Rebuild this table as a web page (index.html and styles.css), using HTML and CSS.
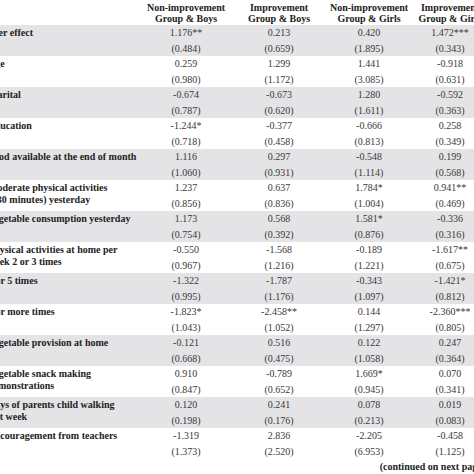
FILE: index.html
```html
<!DOCTYPE html>
<html>
<head>
<meta charset="utf-8">
<link rel="stylesheet" href="styles.css">
</head>
<body>
<div class="page">
  <div class="table">
    <div class="row head">
      <div class="label"></div>
      <div class="cell">Non-improvement<br>Group &amp; Boys</div>
      <div class="cell">Improvement<br>Group &amp; Boys</div>
      <div class="cell">Non-improvement<br>Group &amp; Girls</div>
      <div class="cell">Improvement<br>Group &amp; Girls</div>
    </div>
    <div class="row shade">
      <div class="label">Peer effect</div>
      <div class="cell">1.176**<br>(0.484)</div>
      <div class="cell">0.213<br>(0.659)</div>
      <div class="cell">0.420<br>(1.895)</div>
      <div class="cell">1.472***<br>(0.343)</div>
    </div>
    <div class="row">
      <div class="label">Age</div>
      <div class="cell">0.259<br>(0.980)</div>
      <div class="cell">1.299<br>(1.172)</div>
      <div class="cell">1.441<br>(3.085)</div>
      <div class="cell">-0.918<br>(0.631)</div>
    </div>
    <div class="row shade">
      <div class="label">Marital</div>
      <div class="cell">-0.674<br>(0.787)</div>
      <div class="cell">-0.673<br>(0.620)</div>
      <div class="cell">1.280<br>(1.611)</div>
      <div class="cell">-0.592<br>(0.363)</div>
    </div>
    <div class="row">
      <div class="label">Education</div>
      <div class="cell">-1.244*<br>(0.718)</div>
      <div class="cell">-0.377<br>(0.458)</div>
      <div class="cell">-0.666<br>(0.813)</div>
      <div class="cell">0.258<br>(0.349)</div>
    </div>
    <div class="row shade">
      <div class="label">Food available at the end of month</div>
      <div class="cell">1.116<br>(1.060)</div>
      <div class="cell">0.297<br>(0.931)</div>
      <div class="cell">-0.548<br>(1.114)</div>
      <div class="cell">0.199<br>(0.568)</div>
    </div>
    <div class="row">
      <div class="label two">Moderate physical activities<br>(≥30 minutes) yesterday</div>
      <div class="cell">1.237<br>(0.856)</div>
      <div class="cell">0.637<br>(0.836)</div>
      <div class="cell">1.784*<br>(1.004)</div>
      <div class="cell">0.941**<br>(0.469)</div>
    </div>
    <div class="row shade">
      <div class="label">Vegetable consumption yesterday</div>
      <div class="cell">1.173<br>(0.754)</div>
      <div class="cell">0.568<br>(0.392)</div>
      <div class="cell">1.581*<br>(0.876)</div>
      <div class="cell">-0.336<br>(0.316)</div>
    </div>
    <div class="row">
      <div class="label">Physical activities at home per<br>week 2 or 3 times</div>
      <div class="cell">-0.550<br>(0.967)</div>
      <div class="cell">-1.568<br>(1.216)</div>
      <div class="cell">-0.189<br>(1.221)</div>
      <div class="cell">-1.617**<br>(0.675)</div>
    </div>
    <div class="row shade">
      <div class="label">4 or 5 times</div>
      <div class="cell">-1.322<br>(0.995)</div>
      <div class="cell">-1.787<br>(1.176)</div>
      <div class="cell">-0.343<br>(1.097)</div>
      <div class="cell">-1.421*<br>(0.812)</div>
    </div>
    <div class="row">
      <div class="label">6 or more times</div>
      <div class="cell">-1.823*<br>(1.043)</div>
      <div class="cell">-2.458**<br>(1.052)</div>
      <div class="cell">0.144<br>(1.297)</div>
      <div class="cell">-2.360***<br>(0.805)</div>
    </div>
    <div class="row shade">
      <div class="label">Vegetable provision at home</div>
      <div class="cell">-0.121<br>(0.668)</div>
      <div class="cell">0.516<br>(0.475)</div>
      <div class="cell">0.122<br>(1.058)</div>
      <div class="cell">0.247<br>(0.364)</div>
    </div>
    <div class="row">
      <div class="label">Vegetable snack making<br>demonstrations</div>
      <div class="cell">0.910<br>(0.847)</div>
      <div class="cell">-0.789<br>(0.652)</div>
      <div class="cell">1.669*<br>(0.945)</div>
      <div class="cell">0.070<br>(0.341)</div>
    </div>
    <div class="row shade">
      <div class="label">Days of parents child walking<br>last week</div>
      <div class="cell">0.120<br>(0.198)</div>
      <div class="cell">0.241<br>(0.176)</div>
      <div class="cell">0.078<br>(0.213)</div>
      <div class="cell">0.019<br>(0.083)</div>
    </div>
    <div class="row">
      <div class="label">Encouragement from teachers</div>
      <div class="cell">-1.319<br>(1.373)</div>
      <div class="cell">2.836<br>(2.520)</div>
      <div class="cell">-2.205<br>(6.953)</div>
      <div class="cell">-0.458<br>(1.125)</div>
    </div>
    <div class="foot">(continued on next page)</div>
  </div>
</div>
</body>
</html>
```

FILE: styles.css
```css
html, body {
  margin: 0;
  padding: 0;
  background: #ffffff;
}
body {
  width: 474px;
  height: 474px;
  overflow: hidden;
  font-family: "Liberation Serif", "Times New Roman", serif;
  color: #2a2a2a;
}
.page {
  width: 474px;
  overflow: hidden;
}
.table {
  margin-left: -12px;
  width: 500px;
}
.row {
  display: grid;
  grid-template-columns: 152px 92px 94px 86px 76px;
  height: 31px;
}
.row.shade {
  background: #e4e4e6;
}
.row.head {
  height: 25px;
  background: #ffffff;
}
.head .cell {
  font-weight: bold;
  font-size: 10px;
  line-height: 11px;
  padding-top: 1.5px;
  color: #222;
}
.label {
  font-weight: bold;
  font-size: 10px;
  line-height: 11.5px;
  padding-top: 2px;
  color: #222;
  white-space: nowrap;
}
.cell {
  text-align: center;
  font-size: 10px;
  line-height: 15.5px;
  color: #383838;
  white-space: nowrap;
}
.foot {
  width: 500px;
  box-sizing: border-box;
  padding-right: 3px;
  padding-top: 2px;
  text-align: right;
  font-weight: bold;
  font-size: 10px;
  line-height: 12px;
  color: #222;
}
```
